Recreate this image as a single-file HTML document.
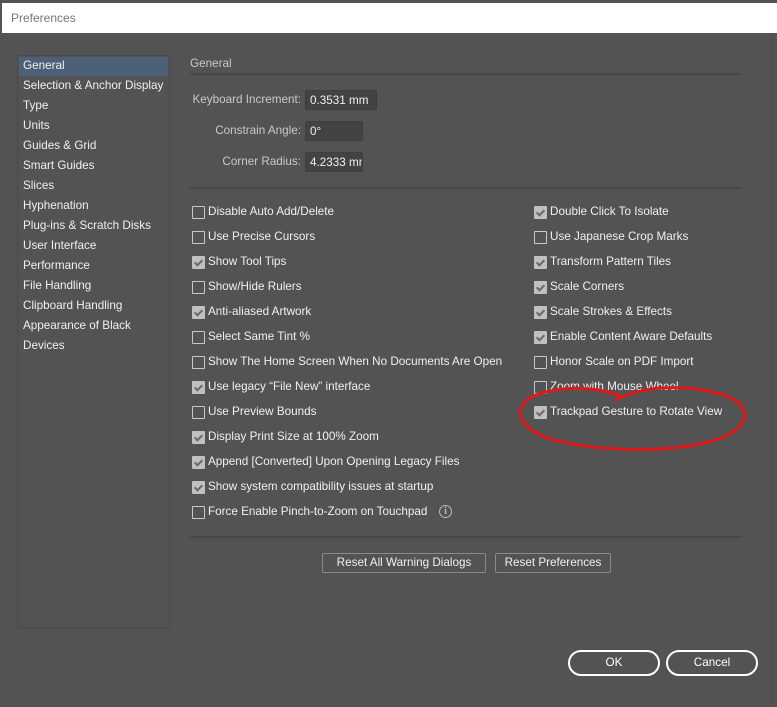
<!DOCTYPE html><html><head><style>
body{margin:0;width:777px;height:707px;background:#535353;font-family:"Liberation Sans",sans-serif;font-size:11.7px;color:#e8e8e8;position:relative;overflow:hidden}
.a{position:absolute;white-space:nowrap}
.title{left:2px;top:3px;width:775px;height:30px;background:#fff;color:#777;font-size:12px}
.list{left:17px;top:55px;width:151px;height:571px;border:1px solid #4a4a4a;border-radius:2px}
.li{position:absolute;left:5px;height:20px;line-height:20px;color:#f0f0f0}
.sel{left:19px;top:57px;width:149px;height:19px;background:#4c6177}
.lbl{color:#c8c8c8;text-align:right;width:130px}
.inp{background:#434343;border:1px solid #3e3e3e;border-radius:2px;height:20px;line-height:20px;padding-left:4px;color:#f0f0f0;box-sizing:border-box;overflow:hidden}
.sep{height:2px;background:#474747}
.cb{position:absolute;width:11px;height:11px;border:1px solid #c8c8c8;border-radius:1px}
.cb.on{background:#c0c0c0;border-color:#c0c0c0}
.cb.on:after{content:"";position:absolute;left:3px;top:1px;width:3px;height:6px;border:solid #6a6a6a;border-width:0 2px 2px 0;transform:rotate(45deg)}
.ct{position:absolute;color:#f0f0f0;line-height:14px}
.btn{border:1px solid #8a8a8a;border-radius:2px;height:18px;line-height:18px;text-align:center;color:#f0f0f0}
.rb{border:2px solid #fff;border-radius:13px;height:22px;line-height:22px;text-align:center;color:#fff}
</style></head><body>
<div class="a title"><span style="position:absolute;left:9px;top:8px">Preferences</span></div>
<div class="a" style="left:771px;top:33px;width:1px;height:674px;background:#4a4a4a"></div>
<div class="a list"></div>
<div class="a sel"></div>
<div class="a" style="left:18px;top:56px">
<div class="li" style="top:0">General</div><div class="li" style="top:20px">Selection &amp; Anchor Display</div><div class="li" style="top:40px">Type</div><div class="li" style="top:60px">Units</div><div class="li" style="top:80px">Guides &amp; Grid</div><div class="li" style="top:100px">Smart Guides</div><div class="li" style="top:120px">Slices</div><div class="li" style="top:140px">Hyphenation</div><div class="li" style="top:160px">Plug-ins &amp; Scratch Disks</div><div class="li" style="top:180px">User Interface</div><div class="li" style="top:200px">Performance</div><div class="li" style="top:220px">File Handling</div><div class="li" style="top:240px">Clipboard Handling</div><div class="li" style="top:260px">Appearance of Black</div><div class="li" style="top:280px">Devices</div>
</div>
<div class="a" style="left:190px;top:57px;color:#c8c8c8">General</div>
<div class="a sep" style="left:190px;top:73px;width:552px"></div>
<div class="a lbl" style="left:171px;top:93px">Keyboard Increment:</div>
<div class="a inp" style="left:305px;top:90px;width:72px">0.3531 mm</div>
<div class="a lbl" style="left:171px;top:124px">Constrain Angle:</div>
<div class="a inp" style="left:305px;top:121px;width:58px">0°</div>
<div class="a lbl" style="left:171px;top:155px">Corner Radius:</div>
<div class="a inp" style="left:305px;top:152px;width:58px">4.2333 mm</div>
<div class="a sep" style="left:190px;top:187px;width:552px"></div>

<div class="cb" style="left:192px;top:206px"></div><div class="ct" style="left:208px;top:205px">Disable Auto Add/Delete</div>
<div class="cb" style="left:192px;top:231px"></div><div class="ct" style="left:208px;top:230px">Use Precise Cursors</div>
<div class="cb on" style="left:192px;top:256px"></div><div class="ct" style="left:208px;top:255px">Show Tool Tips</div>
<div class="cb" style="left:192px;top:281px"></div><div class="ct" style="left:208px;top:280px">Show/Hide Rulers</div>
<div class="cb on" style="left:192px;top:306px"></div><div class="ct" style="left:208px;top:305px">Anti-aliased Artwork</div>
<div class="cb" style="left:192px;top:331px"></div><div class="ct" style="left:208px;top:330px">Select Same Tint %</div>
<div class="cb" style="left:192px;top:356px"></div><div class="ct" style="left:208px;top:355px">Show The Home Screen When No Documents Are Open</div>
<div class="cb on" style="left:192px;top:381px"></div><div class="ct" style="left:208px;top:380px">Use legacy “File New” interface</div>
<div class="cb" style="left:192px;top:406px"></div><div class="ct" style="left:208px;top:405px">Use Preview Bounds</div>
<div class="cb on" style="left:192px;top:431px"></div><div class="ct" style="left:208px;top:430px">Display Print Size at 100% Zoom</div>
<div class="cb on" style="left:192px;top:456px"></div><div class="ct" style="left:208px;top:455px">Append [Converted] Upon Opening Legacy Files</div>
<div class="cb on" style="left:192px;top:481px"></div><div class="ct" style="left:208px;top:480px">Show system compatibility issues at startup</div>
<div class="cb" style="left:192px;top:506px"></div><div class="ct" style="left:208px;top:505px">Force Enable Pinch-to-Zoom on Touchpad</div>
<div class="a" style="left:439px;top:505px;width:11px;height:11px;border:1.5px solid #bbb;border-radius:50%;font:bold 10px 'Liberation Serif',serif;color:#bbb;text-align:center;line-height:12px">i</div>

<div class="cb on" style="left:534px;top:206px"></div><div class="ct" style="left:550px;top:205px">Double Click To Isolate</div>
<div class="cb" style="left:534px;top:231px"></div><div class="ct" style="left:550px;top:230px">Use Japanese Crop Marks</div>
<div class="cb on" style="left:534px;top:256px"></div><div class="ct" style="left:550px;top:255px">Transform Pattern Tiles</div>
<div class="cb on" style="left:534px;top:281px"></div><div class="ct" style="left:550px;top:280px">Scale Corners</div>
<div class="cb on" style="left:534px;top:306px"></div><div class="ct" style="left:550px;top:305px">Scale Strokes &amp; Effects</div>
<div class="cb on" style="left:534px;top:331px"></div><div class="ct" style="left:550px;top:330px">Enable Content Aware Defaults</div>
<div class="cb" style="left:534px;top:356px"></div><div class="ct" style="left:550px;top:355px">Honor Scale on PDF Import</div>
<div class="cb" style="left:534px;top:381px"></div><div class="ct" style="left:550px;top:380px">Zoom with Mouse Wheel</div>
<div class="cb on" style="left:534px;top:406px"></div><div class="ct" style="left:550px;top:405px">Trackpad Gesture to Rotate View</div>

<div class="a sep" style="left:190px;top:536px;width:552px"></div>
<div class="a btn" style="left:322px;top:553px;width:162px">Reset All Warning Dialogs</div>
<div class="a btn" style="left:495px;top:553px;width:114px">Reset Preferences</div>
<div class="a rb" style="left:568px;top:650px;width:88px">OK</div>
<div class="a rb" style="left:666px;top:650px;width:88px">Cancel</div>

<svg class="a" style="left:0;top:0" width="777" height="707"><path d="M620 396 C595 386 555 385 530 398 C512 410 520 428 548 438 C585 450 655 454 705 443 C738 435 750 420 743 408 C735 394 700 386 660 388 C640 390 625 395 616 400" fill="none" stroke="#e01818" stroke-width="3" stroke-linecap="round"/></svg>
</body></html>
